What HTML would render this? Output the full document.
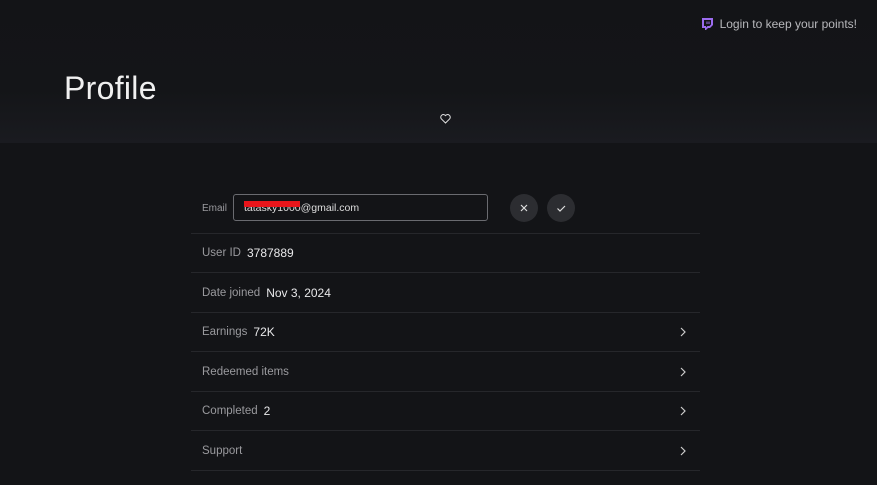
<!DOCTYPE html>
<html><head><style>
*{margin:0;padding:0;box-sizing:border-box}
body{width:877px;height:485px;background:#131417;font-family:"Liberation Sans",sans-serif;position:relative;overflow:hidden;color:#e6e6e6}
.hdr{position:absolute;left:0;top:0;width:877px;height:143px;background:linear-gradient(#131417 0,#141518 90px,#1a1b20 143px)}
.login{position:absolute;right:20px;top:17px;font-size:12px;color:#b8b8bc;display:flex;align-items:center;gap:7px}
h1{position:absolute;left:64px;top:70px;font-size:32px;font-weight:400;color:#f0f0f0;letter-spacing:0.3px}
.heart{position:absolute;left:440px;top:114px}
.wrap{position:absolute;left:191px;top:0;width:509px}
.row{position:absolute;left:0;width:509px;border-bottom:1px solid #26272b;display:flex;align-items:center;padding-left:11px;font-size:11.5px;color:#9a9a9e}
.row b{font-weight:400;color:#e8e8ea;margin-left:6px;font-size:12px}
.chev{position:absolute;right:14px;top:50%;margin-top:-5px}
.inp{position:absolute;left:42px;top:11px;width:255px;height:27px;border:1px solid #6a6b70;border-radius:3px;font-size:10.5px;color:#ddd;padding:7px 0 0 10px}
.red{position:absolute;left:10px;top:6px;width:56px;height:6px;background:#e8151b}
.btn{position:absolute;top:11px;width:28px;height:28px;border-radius:50%;background:#2c2d31}
.btn svg{position:absolute;left:9px;top:9px}
</style></head><body>
<div class="hdr"></div>
<div class="login"><svg width="12" height="12" viewBox="0 0 12 12"><path d="M1 0h11v7l-3 3H7L5 12H4v-2H1z" fill="#9c6cf0"/><path d="M3 2h7v4.5L8.5 8h-2L5 9.5V8H3z" fill="#131417"/><rect x="5.5" y="3.5" width="1" height="2.5" fill="#9c6cf0"/><rect x="7.5" y="3.5" width="1" height="2.5" fill="#9c6cf0"/></svg>Login to keep your points!</div>
<h1>Profile</h1>
<svg class="heart" width="11" height="10" viewBox="0 0 11 10"><path d="M5.5 9L1.3 4.8A2.4 2.4 0 0 1 5.5 1.6 2.4 2.4 0 0 1 9.7 4.8z" fill="none" stroke="#e0e0e0" stroke-width="1"/></svg>
<div class="wrap">
<div class="row" style="top:183px;height:51px;font-size:10px">Email
<div class="inp">tatasky1000@gmail.com<div class="red"></div></div>
<div class="btn" style="left:319px"><svg width="10" height="10"><path d="M2 2l6 6M8 2l-6 6" stroke="#ddd" stroke-width="1.2"/></svg></div>
<div class="btn" style="left:356px"><svg width="10" height="10"><path d="M1.5 5.5l2.5 2.5 5-5" stroke="#ddd" stroke-width="1.2" fill="none"/></svg></div>
</div>
<div class="row" style="top:234px;height:39px">User ID<b>3787889</b></div>
<div class="row" style="top:273px;height:40px">Date joined<b>Nov 3, 2024</b></div>
<div class="row" style="top:313px;height:39px">Earnings<b>72K</b><svg class="chev" width="6" height="10"><path d="M1 1l4 4-4 4" stroke="#ccc" fill="none" stroke-width="1.2"/></svg></div>
<div class="row" style="top:352px;height:40px">Redeemed items<svg class="chev" width="6" height="10"><path d="M1 1l4 4-4 4" stroke="#ccc" fill="none" stroke-width="1.2"/></svg></div>
<div class="row" style="top:392px;height:39px">Completed<b>2</b><svg class="chev" width="6" height="10"><path d="M1 1l4 4-4 4" stroke="#ccc" fill="none" stroke-width="1.2"/></svg></div>
<div class="row" style="top:431px;height:40px">Support<svg class="chev" width="6" height="10"><path d="M1 1l4 4-4 4" stroke="#ccc" fill="none" stroke-width="1.2"/></svg></div>
</div>
</body></html>
